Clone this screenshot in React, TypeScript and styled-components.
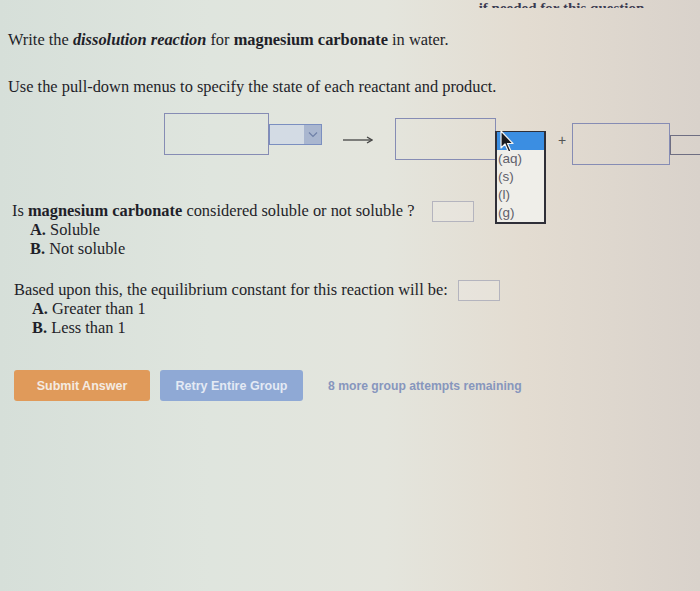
import styled, { createGlobalStyle } from "styled-components";

const GlobalStyle = createGlobalStyle`
  html, body {
    margin: 0;
    padding: 0;
  }
  body {
    background: linear-gradient(90deg, #d6dfd9 0%, #dfe5de 30%, #e4e5dd 55%, #e3dcd1 75%, #d9d2cb 100%);
  }
`;

const Page = styled.div`
  width: 700px;
  height: 591px;
  overflow: hidden;
  padding-left: 8px;
  box-sizing: border-box;
  font-family: "Liberation Serif", "Times New Roman", serif;
  font-size: 16.4px;
  color: #1f1f29;
`;

const TopNote = styled.div`
  height: 8px;
  overflow: hidden;
  text-align: right;
  padding-right: 52px;
  font-weight: bold;
  font-size: 15px;
  color: #3c3c52;
  line-height: 16px;

  span {
    display: inline-block;
    margin-top: -5px;
  }
`;

const Prompt = styled.p<{ $top: number }>`
  margin: ${(p) => p.$top}px 0 0;
  line-height: 18px;
`;

const EquationRow = styled.div`
  display: flex;
  align-items: flex-start;
  margin-top: 17px;
  padding-left: 156px;
  height: 52px;
`;

const BlankBox = styled.div<{ $w: number; $h: number; $top: number; $left?: number }>`
  width: ${(p) => p.$w}px;
  height: ${(p) => p.$h}px;
  margin-top: ${(p) => p.$top}px;
  margin-left: ${(p) => p.$left ?? 0}px;
  border: 1.5px solid #868cb4;
  box-sizing: border-box;
  flex-shrink: 0;
`;

const StateSelect = styled.div<{ $top: number; $w: number; $plain?: boolean }>`
  display: flex;
  width: ${(p) => p.$w}px;
  height: ${(p) => (p.$plain ? 20 : 21)}px;
  margin-top: ${(p) => p.$top}px;
  border: ${(p) => (p.$plain ? "1.5px solid #6e6e82" : "1px solid #7b8fc0")};
  box-sizing: border-box;
  background: ${(p) => (p.$plain ? "transparent" : "#d3dbe4")};
  flex-shrink: 0;
`;

const SelectValue = styled.div`
  flex: 1;
`;

const SelectArrow = styled.div`
  width: 17px;
  background: #a9b6cf;
  display: flex;
  align-items: center;
  justify-content: center;
`;

const ReactionArrow = styled.svg`
  margin: 23px 0 0 21px;
  flex-shrink: 0;
`;

const OpenSelect = styled.div`
  position: relative;
  width: 50px;
  height: 21px;
  margin-top: 18px;
  flex-shrink: 0;
`;

const OptionList = styled.div`
  position: absolute;
  top: 0;
  left: -1px;
  width: 51px;
  border: 2px solid #2f2f38;
  border-top-width: 1px;
  box-sizing: border-box;
  background: #efeee9;
  font-family: "Liberation Sans", Arial, sans-serif;
  font-size: 13.5px;
  color: #5f5f6b;
  z-index: 2;
`;

const Option = styled.div<{ $active?: boolean }>`
  height: 18px;
  line-height: 18px;
  padding-left: 1px;
  background: ${(p) => (p.$active ? "#3b8ee2" : "transparent")};
`;

const Cursor = styled.svg`
  position: absolute;
  top: -2px;
  left: 3px;
`;

const Plus = styled.span`
  margin: 19px 0 0 12px;
  width: 14px;
  font-family: "Liberation Sans", Arial, sans-serif;
  font-size: 14px;
  color: #555;
  flex-shrink: 0;
`;

const QuestionRow = styled.div<{ $top: number; $indent: number; $gap: number }>`
  display: flex;
  align-items: center;
  height: 18px;
  margin-top: ${(p) => p.$top}px;
  padding-left: ${(p) => p.$indent}px;
  gap: ${(p) => p.$gap}px;
`;

const AnswerBox = styled.div`
  width: 42px;
  height: 21px;
  border: 1px solid #b4b4be;
  box-sizing: border-box;
  background: rgba(255, 255, 255, 0.15);
  flex-shrink: 0;
`;

const Choices = styled.div<{ $indent: number }>`
  padding-left: ${(p) => p.$indent}px;
  line-height: 19px;
`;

const Actions = styled.div`
  display: flex;
  align-items: center;
  margin-top: 33px;
  padding-left: 6px;
  font-family: "Liberation Sans", Arial, sans-serif;
  font-weight: bold;
`;

const ActionButton = styled.button<{ $bg: string; $fg: string; $w: number }>`
  width: ${(p) => p.$w}px;
  height: 31px;
  margin-right: 10px;
  border: none;
  border-radius: 3px;
  background: ${(p) => p.$bg};
  color: ${(p) => p.$fg};
  font-family: inherit;
  font-weight: bold;
  font-size: 12.5px;
  padding: 0;
`;

const Remaining = styled.span`
  margin-left: 15px;
  font-size: 12.2px;
  color: #8796bd;
`;

function Chevron() {
  return (
    <svg width="10" height="7" viewBox="0 0 10 7">
      <path d="M1 1.5 L5 5.5 L9 1.5" fill="none" stroke="#6f80a8" strokeWidth="1.2" />
    </svg>
  );
}

export default function App() {
  return (
    <>
      <GlobalStyle />
      <Page>
        <TopNote>
          <span>if needed for this question.</span>
        </TopNote>
        <Prompt $top={23}>
          Write the <b><i>dissolution reaction</i></b> for <b>magnesium carbonate</b> in water.
        </Prompt>
        <Prompt $top={29}>Use the pull-down menus to specify the state of each reactant and product.</Prompt>

        <EquationRow>
          <BlankBox $w={105} $h={42} $top={0} />
          <StateSelect $top={11} $w={53}>
            <SelectValue />
            <SelectArrow>
              <Chevron />
            </SelectArrow>
          </StateSelect>
          <ReactionArrow width="30" height="8" viewBox="0 0 30 8">
            <path d="M0 4 H28" stroke="#444" strokeWidth="1.3" />
            <path d="M24 1 L29 4 L24 7" fill="none" stroke="#444" strokeWidth="1.3" />
          </ReactionArrow>
          <BlankBox $w={101} $h={42} $top={5} $left={22} />
          <OpenSelect>
            <OptionList>
              <Option $active />
              <Option>(aq)</Option>
              <Option>(s)</Option>
              <Option>(l)</Option>
              <Option>(g)</Option>
              <Cursor width="16" height="24" viewBox="0 0 16 24">
                <path
                  d="M1 1 L1 18 L5 14 L8.5 22 L11 21 L7.5 13.5 L13 13.5 Z"
                  fill="#1a1a1f"
                  stroke="#f4f4f4"
                  strokeWidth="1.2"
                  strokeLinejoin="round"
                />
              </Cursor>
            </OptionList>
          </OpenSelect>
          <Plus>+</Plus>
          <BlankBox $w={98} $h={42} $top={10} $left={0} />
          <StateSelect $top={22} $w={40} $plain>
            <SelectValue />
          </StateSelect>
        </EquationRow>

        <QuestionRow $top={37} $indent={4} $gap={18}>
          <span>
            Is <b>magnesium carbonate</b> considered soluble or not soluble ?
          </span>
          <AnswerBox />
        </QuestionRow>
        <Choices $indent={22}>
          <div>
            <b>A.</b> Soluble
          </div>
          <div>
            <b>B.</b> Not soluble
          </div>
        </Choices>

        <QuestionRow $top={23} $indent={6} $gap={10}>
          <span>Based upon this, the equilibrium constant for this reaction will be:</span>
          <AnswerBox />
        </QuestionRow>
        <Choices $indent={24}>
          <div>
            <b>A.</b> Greater than 1
          </div>
          <div>
            <b>B.</b> Less than 1
          </div>
        </Choices>

        <Actions>
          <ActionButton $bg="#e09a5a" $fg="#f4ebe2" $w={136}>
            Submit Answer
          </ActionButton>
          <ActionButton $bg="#8fa9d5" $fg="#e4eaf4" $w={143}>
            Retry Entire Group
          </ActionButton>
          <Remaining>8 more group attempts remaining</Remaining>
        </Actions>
      </Page>
    </>
  );
}
